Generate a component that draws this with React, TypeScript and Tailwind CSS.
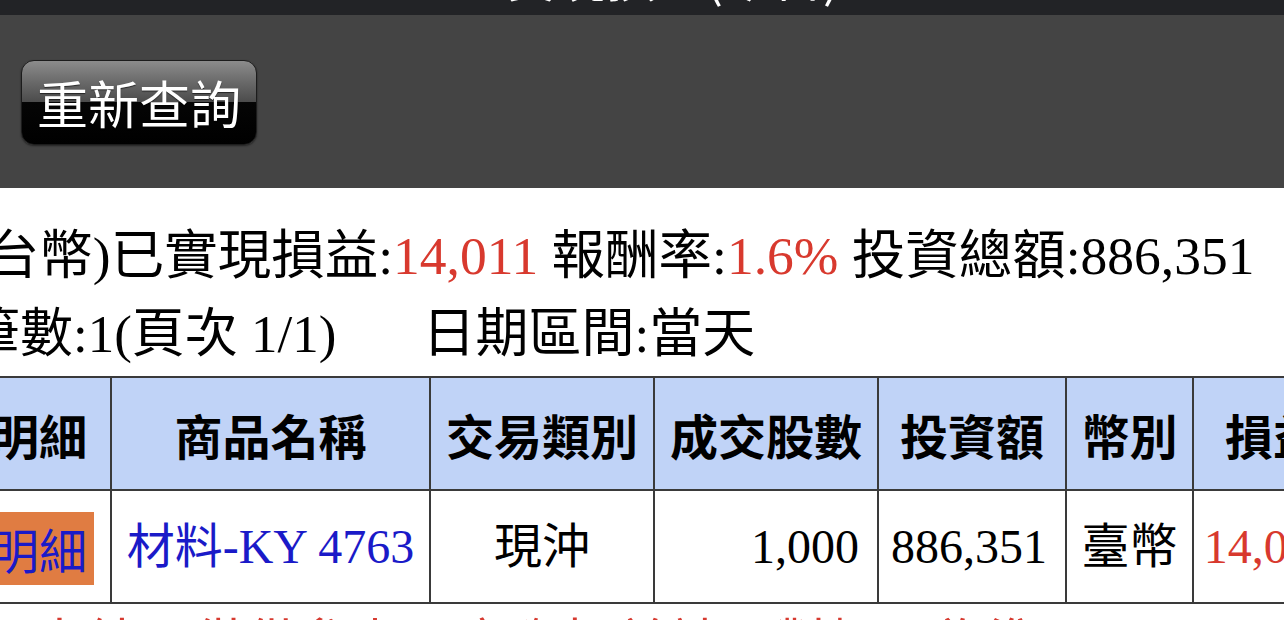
import React from "react";

const FONT = "font-['Liberation_Serif','Noto_Sans_CJK_TC',sans-serif]";

export default function App() {
  return (
    <div className={`w-full h-[620px] overflow-hidden bg-white text-black ${FONT}`}>
      {/* title strip */}
      <div className="h-[15px] bg-[#222326] overflow-hidden flex justify-center">
        <div className="text-white text-[50px] leading-[50px] -mt-[50px] whitespace-nowrap font-['Noto_Sans_CJK_TC',sans-serif] pl-[12px]">
          已實現損益(今日)
        </div>
      </div>

      {/* toolbar */}
      <div className="h-[173px] bg-[#444444] pt-[45px] pl-[21px]">
        <button className="w-[236px] h-[85px] rounded-[13px] border border-[#1c1c1c] bg-[linear-gradient(to_bottom,#8c8c8c_0%,#6a6a6a_25%,#4c4c4c_49%,#050505_50%,#000000_100%)] shadow-[0_1px_2px_rgba(0,0,0,0.5)] flex items-center justify-center">
          <span className="text-white text-[51px] leading-none font-['Noto_Sans_CJK_TC',sans-serif] [text-shadow:0_1px_1px_rgba(0,0,0,0.6)]">
            重新查詢
          </span>
        </button>
      </div>

      {/* summary */}
      <div className="pt-[29px] -ml-[139px] text-[53.5px] leading-[78px] whitespace-nowrap">
        <div>
          合計(台幣)已實現損益:<span className="text-[#d8392e]">14,011</span> 報酬率:
          <span className="text-[#d8392e]">1.6%</span> 投資總額:886,351
        </div>
        <div className="text-[53px]">
          資料筆數:1(頁次 1/1)<span className="ml-[86px]">日期區間:當天</span>
        </div>
      </div>

      {/* table */}
      <table className="-ml-[34px] mt-[3px] w-[1386px] min-w-[1386px] table-fixed border-collapse border-2 border-[#3a3a3a] text-[48px] whitespace-nowrap">
        <colgroup>
          <col className="w-[144px]" />
          <col className="w-[319px]" />
          <col className="w-[224px]" />
          <col className="w-[224px]" />
          <col className="w-[188px]" />
          <col className="w-[127px]" />
          <col className="w-[160px]" />
        </colgroup>
        <thead>
          <tr className="h-[113px] bg-[#c0d3f7] font-['Noto_Sans_CJK_TC',sans-serif] font-bold">
            <th className="border-2 border-[#3a3a3a] text-center p-0">明細</th>
            <th className="border-2 border-[#3a3a3a] text-center p-0">商品名稱</th>
            <th className="border-2 border-[#3a3a3a] text-center p-0">交易類別</th>
            <th className="border-2 border-[#3a3a3a] text-center p-0">成交股數</th>
            <th className="border-2 border-[#3a3a3a] text-center p-0">投資額</th>
            <th className="border-2 border-[#3a3a3a] text-center p-0">幣別</th>
            <th className="border-2 border-[#3a3a3a] text-center p-0">損益</th>
          </tr>
        </thead>
        <tbody>
          <tr className="h-[113px]">
            <td className="border-2 border-[#3a3a3a] text-center p-0">
              <span className="inline-block bg-[#e07c42] text-[#1a1ac8] px-[7px] h-[73px] leading-[73px] align-middle font-['Noto_Sans_CJK_TC',sans-serif]">
                明細
              </span>
            </td>
            <td className="border-2 border-[#3a3a3a] text-center p-0 text-[#1a1ac8]">材料-KY 4763</td>
            <td className="border-2 border-[#3a3a3a] text-center p-0">現沖</td>
            <td className="border-2 border-[#3a3a3a] text-right p-0 pr-[18px]">1,000</td>
            <td className="border-2 border-[#3a3a3a] text-right p-0 pr-[18px]">886,351</td>
            <td className="border-2 border-[#3a3a3a] text-center p-0">臺幣</td>
            <td className="border-2 border-[#3a3a3a] text-right p-0 pr-[18px] text-[#d8392e]">14,011</td>
          </tr>
        </tbody>
      </table>

      {/* note */}
      <div className="pl-[33px] pt-[11px] text-[53px] leading-[60px] text-[#d63a30] whitespace-nowrap">
        本結果僅供參考，實際損益請以對帳單為準。
      </div>
    </div>
  );
}
